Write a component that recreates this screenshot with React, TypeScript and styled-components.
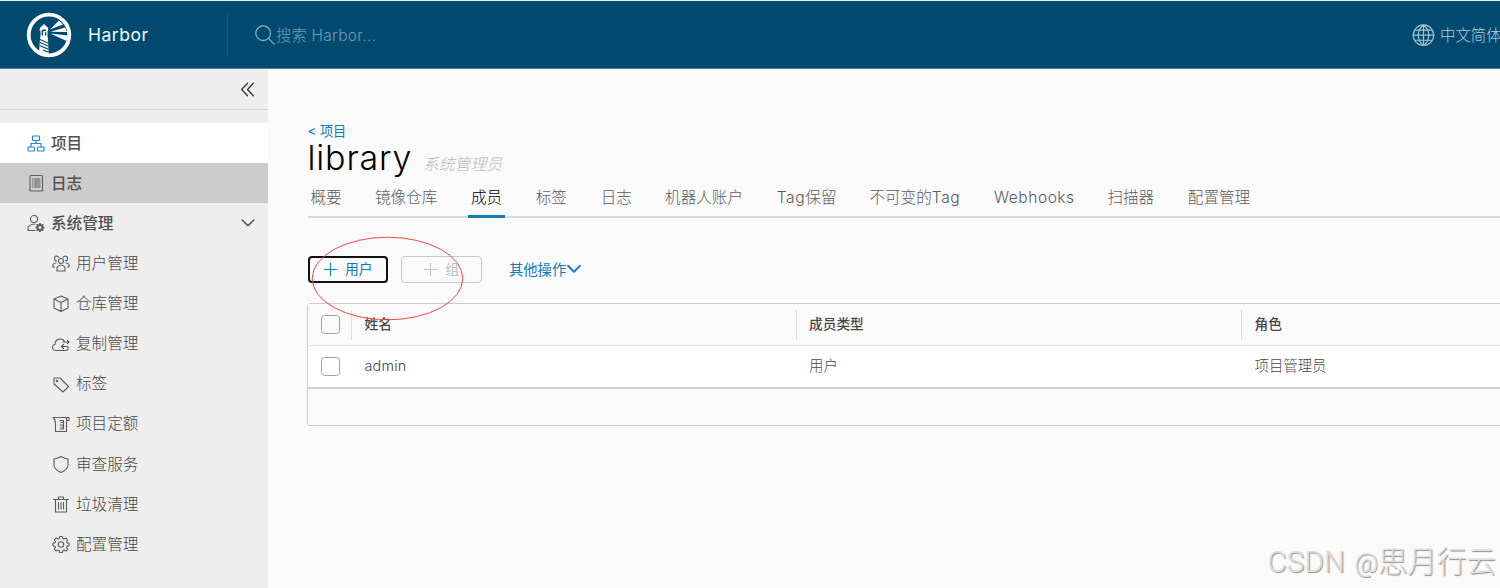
import React from "react";
import styled, { createGlobalStyle, css } from "styled-components";

const cjk = `"Noto Sans CJK SC", sans-serif`;

const Global = createGlobalStyle`
  * { box-sizing: border-box; }
  body { margin: 0; background: #fafafa; overflow: hidden; font-family: Inter, ${cjk}; }
`;

const Page = styled.div`
  width: 1500px;
  height: 588px;
  display: flex;
  flex-direction: column;
  overflow: hidden;
  position: relative;
  background: #fafafa;
`;

const Header = styled.header`
  flex: none;
  height: 69px;
  border-top: 1px solid #e6eef2;
  border-bottom: 1px solid #4d7f9f;
  background: #004a70;
  display: flex;
  align-items: center;
`;

const Brand = styled.div`
  width: 228px;
  height: 44px;
  padding-left: 26px;
  display: flex;
  align-items: center;
  gap: 16px;
  border-right: 1px solid #185a7d;
`;

const BrandName = styled.span`
  color: #f4f8fa;
  font-size: 17.5px;
  letter-spacing: 0.5px;
`;

const Search = styled.div`
  flex: 1;
  display: flex;
  align-items: center;
  padding-left: 26px;
  color: #6f9ab3;
  font-size: 15.5px;
  font-weight: 300;
`;

const HeaderText = styled.span`
  padding-bottom: 2px;
`;

const Latin = styled.span<{ $space?: number }>`
  letter-spacing: ${(p) => p.$space ?? 0.4}px;
`;

const Language = styled.div`
  width: 88px;
  display: flex;
  align-items: center;
  gap: 5px;
  color: #b3cbd8;
  font-size: 15.4px;
  font-weight: 300;
  white-space: nowrap;
  overflow: hidden;
`;

const Body = styled.div`
  flex: 1;
  display: flex;
  min-height: 0;
`;

const Sidebar = styled.nav`
  flex: none;
  width: 267.5px;
  background: #eeeeee;
  display: flex;
  flex-direction: column;
`;

const Collapse = styled.div`
  height: 40.5px;
  border-bottom: 1px solid #d2d2d2;
  margin-bottom: 13.5px;
  display: flex;
  align-items: center;
  justify-content: flex-end;
  padding: 1px 12.5px 0 0;
`;

const NavItem = styled.div<{ $state?: "active" | "hover" }>`
  height: 40.1px;
  flex: none;
  display: flex;
  align-items: center;
  gap: 6.5px;
  padding: 0 13px 0 26.5px;
  font-size: 15.6px;
  font-weight: 500;
  color: #505050;
  ${(p) => p.$state === "active" && css`background: #ffffff;`}
  ${(p) => p.$state === "hover" && css`background: #cccccc;`}
`;

const NavText = styled.span`
  flex: 1;
  padding-bottom: 2.6px;
`;

const SubItem = styled(NavItem)`
  padding-left: 51.5px;
  font-weight: 300;
  color: #484848;
`;

const Main = styled.main`
  flex: 1;
  min-width: 0;
  padding: 51px 0 0 40px;
  overflow: hidden;
`;

const Crumb = styled.div`
  height: 22px;
  line-height: 22px;
  font-size: 13.2px;
  color: #0f7db8;
`;

const TitleRow = styled.div`
  height: 38px;
  display: flex;
  align-items: baseline;
  line-height: 32px;
`;

const Title = styled.h1`
  margin: 0;
  width: 115.5px;
  font-weight: 300;
  font-size: 34px;
  letter-spacing: 0.85px;
  color: #000000;
`;

const Role = styled.span`
  font-size: 15.8px;
  font-weight: 300;
  font-style: italic;
  color: #b8b8b8;
`;

const Tabs = styled.div`
  height: 38px;
  display: flex;
  align-items: stretch;
  border-bottom: 2px solid #d8d8d8;
`;

const Tab = styled.div<{ $w: number; $active?: boolean }>`
  flex: none;
  width: ${(p) => p.$w}px;
  height: 38px;
  margin-right: 27.4px;
  padding-left: 3px;
  line-height: 36px;
  font-size: 15.6px;
  font-weight: 300;
  white-space: nowrap;
  color: ${(p) => (p.$active ? "#000" : "#5c5c5c")};
  box-shadow: ${(p) => (p.$active ? "inset 0 -3px 0 #0f7db8" : "none")};
`;

const Actions = styled.div`
  margin-top: 38px;
  height: 27px;
  display: flex;
  align-items: stretch;
`;

const Button = styled.button<{ $disabled?: boolean }>`
  width: 80.5px;
  margin: 0 13px 0 0;
  padding: 0 0 1px;
  display: flex;
  align-items: center;
  justify-content: center;
  gap: 7px;
  font-family: inherit;
  font-size: 13.8px;
  line-height: 20px;
  background: transparent;
  border-radius: 4px;
  border: ${(p) => (p.$disabled ? "1px solid #c8c8c8" : "2px solid #111")};
  color: ${(p) => (p.$disabled ? "#c0c0c0" : "#0f7db8")};
`;

const More = styled.div`
  padding: 0 0 2px 14.5px;
  display: flex;
  align-items: center;
  gap: 1px;
  font-size: 14.3px;
  color: #0f7db8;
`;

const Grid = styled.div`
  margin: 20px 0 0 -0.5px;
  width: 1240px;
  height: 123px;
  border: 1px solid #cccccc;
  border-radius: 3px;
  display: flex;
  flex-direction: column;
`;

const Row = styled.div<{ $head?: boolean }>`
  flex: none;
  height: ${(p) => (p.$head ? 42 : 42.6)}px;
  display: grid;
  grid-template-columns: 43px 444.500px 445.500px 1fr;
  align-items: center;
  font-size: ${(p) => (p.$head ? 13.7 : 14.4)}px;
  font-weight: ${(p) => (p.$head ? 500 : 300)};
  color: #484848;
  background: ${(p) => (p.$head ? "#fafafa" : "#fff")};
  border-bottom: ${(p) => (p.$head ? "1px solid #e2e2e2" : "2px solid #cfcfcf")};
`;

const Cell = styled.div<{ $line?: boolean }>`
  height: 30px;
  line-height: ${(p) => (p.$line ? 28 : 29)}px;
  padding-left: 12.5px;
  border-left: 1px solid ${(p) => (p.$line ? "#dedede" : "transparent")};
`;

const CheckBox = styled.span`
  width: 18.5px;
  height: 18.5px;
  margin-left: 13px;
  border: 1.4px solid #a2a2a2;
  border-radius: 3.5px;
`;

const Marking = styled.svg`
  position: absolute;
  left: 310px;
  top: 235px;
`;

const Watermark = styled.div`
  position: absolute;
  right: 4px;
  top: 541px;
  height: 42px;
  line-height: 42px;
  display: flex;
  gap: 9px;
  white-space: nowrap;
  font-family: Roboto, ${cjk};
  font-size: 29.5px;
  font-weight: 300;
  color: #dedede;
  text-shadow: 1px 1px 1px #909090;
`;

const WatermarkSite = styled.span`
  letter-spacing: 0.2px;
`;

const WatermarkAt = styled.span`
  font-size: 26px;
`;

type IconProps = { size?: number; color?: string; w?: number; children: React.ReactNode };

const Glyph = styled.svg`
  flex: none;
`;

const Icon = ({ size = 18, color = "#5c5c5c", w = 2.2, children }: IconProps) => (
  <Glyph width={size} height={size} viewBox="0 0 36 36" fill="none" stroke={color} strokeWidth={w}
    strokeLinecap="round" strokeLinejoin="round">
    {children}
  </Glyph>
);

const Logo = () => (
  <svg width="46" height="46" viewBox="0 0 46 46">
    <circle cx="23" cy="23" r="20.300" fill="#004a70" stroke="#fff" strokeWidth="3.800" />
    <path d="M13.500 18.500L14 15.800L18 12L22 15.800L22.300 18.500L21.500 19V24.500L22 26.500L22.600 43L13 41L14 26.500L14.500 24.500V19Z" fill="#fff" />
    <path d="M16.300 18.200h3.600M16.300 18.200v5.200M19.600 20.200v3.200" stroke="#004a70" strokeWidth="1.400" fill="none" />
    <path d="M14 27.500L22 31M14 30.500L22 34M13.500 33.500L22 37M17 38l5 2" stroke="#004a70" strokeWidth="1.100" />
    <path d="M24 17.500L33 8.500L37 12.500ZM24.500 19.800L39 15.500L41 20ZM24.500 21.500L42 23.500L40.500 29Z" fill="#fff" />
  </svg>
);

const SearchIcon = () => (
  <Icon size={22} color="#8fb2c5" w={2.1}><circle cx="15" cy="15" r="12" /><path d="M24 24l9 9" /></Icon>
);
const Globe = () => (
  <Icon size={23} color="#a3c0d0" w={1.9}>
    <circle cx="18" cy="19" r="16" />
    <path d="M18 3v32M2 19h32M5 11h26M5 27h26M18 3c-11 8-11 24 0 32M18 3c11 8 11 24 0 32" />
  </Icon>
);
const Projects = () => (
  <Icon color="#2389cc" w={2.4}>
    <rect x="11" y="4" width="14" height="9" rx="1" />
    <rect x="2" y="26" width="13" height="8" rx="1" />
    <rect x="21" y="26" width="13" height="8" rx="1" />
    <path d="M18 13v6M8 26v-7h20v7" />
  </Icon>
);
const Logs = () => (
  <Icon>
    <rect x="6" y="3" width="25" height="31" rx="2" />
    <path d="M11 10h1M15 10h11M11 14h1M15 14h11M11 18h1M15 18h11M11 22h1M15 22h11M11 26h1M15 26h11" />
  </Icon>
);
const Gear = () => (
  <Icon>
    <path d="M15.400 3h5.200l.9 4 2.600 1.100 3.500-2.200 3.700 3.700-2.200 3.500 1.100 2.600 3.800.8v5.200l-3.800.8-1.100 2.600 2.200 3.500-3.700 3.700-3.500-2.200-2.600 1.100-.9 4h-5.200l-.9-4-2.600-1.100-3.500 2.200-3.700-3.700 2.200-3.500-1.100-2.600-3.800-.8v-5.200l3.800-.8 1.100-2.600-2.200-3.500 3.700-3.700 3.500 2.200L14.500 7z" />
    <circle cx="18" cy="19" r="5.500" />
  </Icon>
);
const Admin = () => (
  <Icon>
    <circle cx="14" cy="10" r="7" />
    <path d="M16 33H2v-6c3-5 8-7 14-7" />
    <circle cx="26" cy="27" r="5" strokeWidth="4" />
    <path d="M26 18v3M26 33v3M17 27h3M32 27h3M19.500 20.500l2 2M30.500 31.500l2 2M32.500 20.500l-2 2M21.500 31.500l-2 2" strokeWidth="3.500" strokeLinecap="butt" />
  </Icon>
);
const Users = () => (
  <Icon>
    <circle cx="18" cy="14" r="5" />
    <path d="M10 34v-7c2-4 4-5 8-5s6 1 8 5v7zM9 14c-5-1-6-9 0-10 3 0 4 1 5 3M27 14c5-1 6-9 0-10-3 0-4 1-5 3M5 26H2v-5c1-2 3-3 6-3M31 26h3v-5c-1-2-3-3-6-3" />
  </Icon>
);
const Cube = () => (
  <Icon><path d="M18 4l14 6v18l-14 7-14-7V10zM4 10l14 7 14-7M18 17v18" /></Icon>
);
const Cloud = () => (
  <Icon>
    <path d="M32 23c1 6-1 8-5 8H7c-8 0-8-11-1-12C6 7 22 4 25 14M22 14h12M31 11l3 3-3 3M30 23H19M23 19l-4 4 4 4" />
  </Icon>
);
const Tag = () => (
  <Icon><path d="M4 6h12l17 17-11 11L4 18z" /><circle cx="10" cy="12" r="1.500" /></Icon>
);
const Quota = () => (
  <Icon>
    <path d="M2 5h32v6h-4M2 5c4 3 5 7 5 12v16h22V5M16 11h7v17h-7M18 15h5M16 20h7M18 24h5" />
  </Icon>
);
const Shield = () => (
  <Icon><path d="M18 3c5 3 9 4 14 5v12c0 8-7 12-14 15C11 32 4 28 4 20V8c5-1 9-2 14-5z" /></Icon>
);
const Trash = () => (
  <Icon><path d="M3 9h30M7 9v25h22V9M13 9V4h10v5M13 15v13M18 15v13M23 15v13" /></Icon>
);
const Chevron = ({ color = "#454545", size = 14, w = 3.6 }) => (
  <Icon size={size} color={color} w={w}><path d="M3 10l15 15 15-15" /></Icon>
);
const Plus = ({ color }: { color: string }) => (
  <Icon size={15} color={color} w={2.6}><path d="M18 3v30M3 18h30" /></Icon>
);

const subItems: [React.FC, string][] = [
  [Users, "用户管理"],
  [Cube, "仓库管理"],
  [Cloud, "复制管理"],
  [Tag, "标签"],
  [Quota, "项目定额"],
  [Shield, "审查服务"],
  [Trash, "垃圾清理"],
  [Gear, "配置管理"],
];

export default function App() {
  return (
    <Page>
      <Global />
      <Header>
        <Brand><Logo /><BrandName>Harbor</BrandName></Brand>
        <Search><SearchIcon /><HeaderText>搜索 <Latin $space={0.35}>Harbor...</Latin></HeaderText></Search>
        <Language><Globe /><HeaderText>中文简体</HeaderText></Language>
      </Header>
      <Body>
        <Sidebar>
          <Collapse>
            <Icon size={15} color="#333" w={3}><path d="M18 3L4 18l14 15M32 3L18 18l14 15" /></Icon>
          </Collapse>
          <NavItem $state="active"><Projects /><NavText>项目</NavText></NavItem>
          <NavItem $state="hover"><Logs /><NavText>日志</NavText></NavItem>
          <NavItem><Admin /><NavText>系统管理</NavText><Chevron /></NavItem>
          {subItems.map(([SubIcon, label]) => (
            <SubItem key={label}><SubIcon /><NavText>{label}</NavText></SubItem>
          ))}
        </Sidebar>
        <Main>
          <Crumb>&lt; 项目</Crumb>
          <TitleRow><Title>library</Title><Role>系统管理员</Role></TitleRow>
          <Tabs>
            <Tab $w={37}>概要</Tab>
            <Tab $w={68.6}>镜像仓库</Tab>
            <Tab $w={37.5} $active>成员</Tab>
            <Tab $w={37.5}>标签</Tab>
            <Tab $w={37}>日志</Tab>
            <Tab $w={84.3}>机器人账户</Tab>
            <Tab $w={65.3}><Latin $space={0.6}>Tag</Latin>保留</Tab>
            <Tab $w={97.2}>不可变的<Latin $space={0.6}>Tag</Latin></Tab>
            <Tab $w={86}><Latin $space={0.5}>Webhooks</Latin></Tab>
            <Tab $w={53}>扫描器</Tab>
            <Tab $w={68}>配置管理</Tab>
          </Tabs>
          <Actions>
            <Button><Plus color="#0f7db8" />用户</Button>
            <Button $disabled><Plus color="#c0c0c0" />组</Button>
            <More>其他操作<Chevron color="#0f7db8" size={14} w={5} /></More>
          </Actions>
          <Grid>
            <Row $head>
              <CheckBox /><Cell $line>姓名</Cell><Cell $line>成员类型</Cell><Cell $line>角色</Cell>
            </Row>
            <Row>
              <CheckBox /><Cell><Latin $space={0.2}>admin</Latin></Cell><Cell>用户</Cell><Cell>项目管理员</Cell>
            </Row>
          </Grid>
        </Main>
      </Body>
      <Marking width="156" height="88" viewBox="0 0 156 88" fill="none">
        <ellipse cx="77.5" cy="43.5" rx="75.3" ry="41.3" stroke="#f0494c" strokeWidth="1" />
      </Marking>
      <Watermark>
        <WatermarkSite>CSDN</WatermarkSite>
        <span><WatermarkAt>@</WatermarkAt>思月行云</span>
      </Watermark>
    </Page>
  );
}
